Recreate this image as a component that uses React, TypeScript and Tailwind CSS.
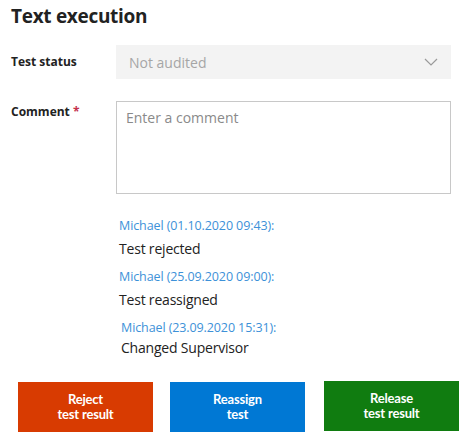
import React from "react";

const font = { fontFamily: '"Open Sans", "Noto Sans", sans-serif' };
const btnFont = { fontFamily: 'Lato, "Open Sans", sans-serif' };

function Entry({ who, when, text, indent }: { who: string; when: string; text: string; indent?: boolean }) {
  return (
    <div className={indent ? "pl-[2px]" : ""}>
      <div className="text-[12.5px] leading-[16px] text-[#3d91d8] tracking-[-0.1px]">
        {who} ({when}):
      </div>
      <div className={"text-[14px] leading-[20px] text-[#222] tracking-[-0.2px] " + (indent ? "mt-[2px]" : "mt-[5px]")}>{text}</div>
    </div>
  );
}

export default function App() {
  return (
    <div className="w-[474px] h-[447px] bg-white relative overflow-hidden" style={font}>
      <div className="px-[11px] pt-[3px]">
        <h1 className="text-[19px] font-bold leading-[26px] text-[#222] tracking-[-0.3px]">Text execution</h1>
        <div className="flex items-center mt-[16px]">
          <div className="w-[105px] text-[12px] font-bold text-[#222]">Test status</div>
          <div className="w-[335px] h-[34px] bg-[#f3f3f3] flex items-center justify-between pl-[13px] pr-[13px]">
            <span className="text-[14px] text-[#a6a6a6]">Not audited</span>
            <svg width="14" height="8" viewBox="0 0 14 8" fill="none">
              <path d="M1 1l6 6 6-6" stroke="#9a9a9a" strokeWidth="1.2" />
            </svg>
          </div>
        </div>
        <div className="flex mt-[22px]">
          <div className="w-[105px] text-[12px] font-bold text-[#222] pt-[2px]">
            Comment <span className="text-[#c4314b]">*</span>
          </div>
          <div className="w-[335px] h-[93px] border border-[#c8c8c8] px-[9px] pt-[5px] text-[14px] text-[#8a8a8a]">
            Enter a comment
          </div>
        </div>
        <div className="ml-[108px] mt-[24px] flex flex-col gap-[10px]">
          <Entry who="Michael" when="01.10.2020 09:43" text="Test rejected" />
          <Entry who="Michael" when="25.09.2020 09:00" text="Test reassigned" />
          <Entry who="Michael" when="23.09.2020 15:31" text="Changed Supervisor" indent />
        </div>
        <div className="flex ml-[7px] mt-[24px] text-white text-[13px] font-bold leading-[15px] tracking-[-0.2px]" style={btnFont}>
          <button className="w-[135px] h-[50px] bg-[#d83b01] flex items-center justify-center text-center">
            Reject<br />test result
          </button>
          <button className="w-[135px] h-[50px] ml-[17px] bg-[#0078d4] flex items-center justify-center text-center">
            Reassign<br />test
          </button>
          <button className="w-[135px] h-[50px] ml-[19px] bg-[#107c10] flex items-center justify-center text-center -mt-[1px]">
            Release<br />test result
          </button>
        </div>
      </div>
    </div>
  );
}
